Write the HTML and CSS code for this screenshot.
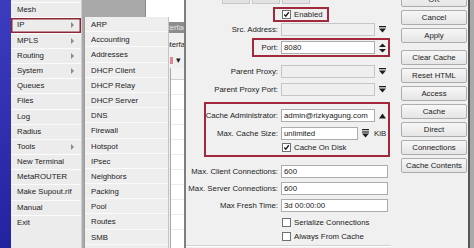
FILE: index.html
```html
<!DOCTYPE html>
<html>
<head>
<meta charset="utf-8">
<title>Web Proxy Settings</title>
<link rel="stylesheet" href="styles.css">
</head>
<body>
<div class="screen">
  <div class="brand"></div>

  <ul class="menu">
    <li></li>
    <li>Mesh</li>
    <li class="sub picked">IP</li>
    <li class="sub">MPLS</li>
    <li class="sub">Routing</li>
    <li class="sub">System</li>
    <li>Queues</li>
    <li>Files</li>
    <li>Log</li>
    <li>Radius</li>
    <li class="sub">Tools</li>
    <li>New Terminal</li>
    <li>MetaROUTER</li>
    <li>Make Supout.rif</li>
    <li>Manual</li>
    <li>Exit</li>
  </ul>

  <div class="desk">
    <div class="win back"></div>

    <div class="win iface">
      <div class="caption">Interface List</div>
      <div class="itab">Interface</div>
      <div class="itool"><span class="filter"></span><span class="drop">&#9662;</span></div>
      <div class="itable">
        <div class="ihead"></div>
        <div></div><div></div><div></div><div></div><div></div><div></div><div></div><div></div><div></div><div></div>
      </div>
    </div>

    <ul class="popup">
      <li>ARP</li>
      <li>Accounting</li>
      <li>Addresses</li>
      <li>DHCP Client</li>
      <li>DHCP Relay</li>
      <li>DHCP Server</li>
      <li>DNS</li>
      <li>Firewall</li>
      <li>Hotspot</li>
      <li>IPsec</li>
      <li>Neighbors</li>
      <li>Packing</li>
      <li>Pool</li>
      <li>Routes</li>
      <li>SMB</li>
    </ul>

    <div class="dialog">
      <div class="form">
        <div class="tabs"><span></span><span></span><span></span></div>

        <div class="sec s1">
          <div class="check"><span class="box on"><svg viewBox="0 0 9 9"><path d="M1.6 4.6l2 2 3.8-5"/></svg></span>Enabled</div>
          <div class="row">
            <span class="lbl">Src. Address:</span><span class="fld off"></span>
            <span class="arr"><svg viewBox="0 0 7 7" width="7" height="7"><rect width="7" height="1.3"/><path d="M0 2.6h7L3.5 6.6z"/></svg></span>
          </div>
        </div>

        <div class="sec s2">
          <div class="row">
            <span class="lbl">Port:</span><span class="fld">8080</span>
            <span class="arr"><svg viewBox="0 0 7 10" width="7" height="10"><path d="M0 4h7L3.5 0.4z M0 6h7L3.5 9.6z"/></svg></span>
          </div>
        </div>

        <div class="sec s3">
          <div class="row">
            <span class="lbl">Parent Proxy:</span><span class="fld off"></span>
            <span class="arr"><svg viewBox="0 0 7 7" width="7" height="7"><rect width="7" height="1.3"/><path d="M0 2.6h7L3.5 6.6z"/></svg></span>
          </div>
          <div class="row">
            <span class="lbl">Parent Proxy Port:</span><span class="fld off"></span>
            <span class="arr"><svg viewBox="0 0 7 7" width="7" height="7"><rect width="7" height="1.3"/><path d="M0 2.6h7L3.5 6.6z"/></svg></span>
          </div>
        </div>

        <div class="sec s4">
          <div class="row">
            <span class="lbl">Cache Administrator:</span><span class="fld">admin@rizkyagung.com</span>
            <span class="arr"><svg viewBox="0 0 7 6" width="7" height="6"><path d="M0 5.5h7L3.5 0.5z"/></svg></span>
          </div>
          <div class="row">
            <span class="lbl">Max. Cache Size:</span><span class="fld short">unlimited</span>
            <span class="arr"><svg viewBox="0 0 7 9" width="7" height="9"><rect width="7" height="1.2"/><rect y="2.4" width="7" height="1.2"/><path d="M0 4.6h7L3.5 8.6z"/></svg></span>
            <span class="unit">KiB</span>
          </div>
          <div class="check tight"><span class="box on"><svg viewBox="0 0 9 9"><path d="M1.6 4.6l2 2 3.8-5"/></svg></span>Cache On Disk</div>
        </div>

        <div class="sec s5">
          <div class="row">
            <span class="lbl">Max. Client Connections:</span><span class="fld wide">600</span>
          </div>
          <div class="row">
            <span class="lbl">Max. Server Connections:</span><span class="fld wide">600</span>
          </div>
          <div class="row">
            <span class="lbl">Max Fresh Time:</span><span class="fld wide">3d 00:00:00</span>
          </div>
          <div class="check"><span class="box"></span>Serialize Connections</div>
          <div class="check tight"><span class="box"></span>Always From Cache</div>
        </div>

        <div class="rule"></div>
      </div>

      <div class="buttons">
        <div class="btn">OK</div>
        <div class="btn">Cancel</div>
        <div class="btn">Apply</div>
        <div class="btn split">Clear Cache</div>
        <div class="btn">Reset HTML</div>
        <div class="btn">Access</div>
        <div class="btn">Cache</div>
        <div class="btn">Direct</div>
        <div class="btn">Connections</div>
        <div class="btn">Cache Contents</div>
      </div>

      <!-- red markers drawn over the form -->
      <div class="mark m-enabled"></div>
      <div class="mark m-port"></div>
      <div class="mark m-cache"></div>
    </div>
  </div>
</div>
</body>
</html>
```

FILE: styles.css
```css
html, body {
  margin: 0;
  height: 100%;
  font-family: "Liberation Sans", Arial, sans-serif;
  font-size: 7.8px;
  color: #222;
}
* {
  box-sizing: border-box;
}
ul {
  list-style: none;
  margin: 0;
  padding: 0;
}

.screen {
  display: flex;
  width: 474px;
  height: 248px;
  overflow: hidden;
  background: #a9a9a9;
}
.brand {
  width: 11px;
  background: linear-gradient(#3c3cbf, #2323a0);
}

/* left main menu */
.menu {
  width: 71px;
  margin-top: -13px;
  background: #ececec;
  border-right: 1px solid #cfcfcf;
}
.menu li {
  position: relative;
  height: 15.2px;
  line-height: 14px;
  padding-left: 6px;
  border-top: 1px solid #fbfbfb;
}
.menu li.sub::after {
  content: "";
  position: absolute;
  right: 7px;
  top: 4px;
  border-left: 3px solid #8a8a8a;
  border-top: 3px solid transparent;
  border-bottom: 3px solid transparent;
}
.menu li.picked {
  box-shadow: inset 0 0 0 1.5px #8f2636;
}

/* workspace with windows */
.desk {
  position: relative;
  flex: 1;
}
.win {
  position: absolute;
}
.back {
  left: 63px;
  top: 0;
  width: 40px;
  height: 30px;
  background: #fff;
  border-left: 1px solid #8a8a8a;
}
.iface {
  left: 18px;
  top: 22px;
  width: 84px;
  bottom: 0;
  background: #f0f0f0;
}
.caption {
  height: 11px;
  line-height: 11px;
  padding-left: 61px;
  background: #8d8d8d;
  color: #e4e4e4;
  white-space: nowrap;
  overflow: hidden;
}
.itab {
  height: 15px;
  margin-top: 4px;
  line-height: 15px;
  padding-left: 63px;
  white-space: nowrap;
  overflow: hidden;
}
.itool {
  display: flex;
  align-items: center;
  height: 16px;
  padding-left: 70px;
  font-size: 9px;
}
.filter {
  width: 3px;
  height: 7px;
  margin-right: 3px;
  background: #d98a96;
}
.itable {
  margin-left: 70px;
  height: 200px;
  background: #fff;
  border-left: 1px solid #a6a6a6;
}
.itable div {
  height: 15px;
  border-bottom: 1px solid #ececec;
}
.itable .ihead {
  height: 12px;
  background: #f4f4f4;
  border-bottom: 1px solid #cfcfcf;
}

/* IP submenu */
.popup {
  position: absolute;
  left: 2px;
  top: 17px;
  width: 85px;
  bottom: -10px;
  background: #eeeeee;
  border-left: 1px solid #9c9c9c;
  border-right: 1px solid #c4c4c4;
}
.popup li {
  height: 15.2px;
  line-height: 15px;
  padding-left: 6px;
  border-bottom: 1px solid #fafafa;
}

/* web proxy dialog */
.dialog {
  position: absolute;
  left: 102px;
  top: 0;
  width: 286px;
  bottom: 0;
  display: flex;
  background: #f0f0f0;
  border-left: 2px solid #7e7e7e;
  border-right: 2px solid #565656;
}
.form {
  width: 205px;
}
.tabs {
  display: flex;
  gap: 2px;
  height: 4px;
  padding-left: 36px;
}
.tabs span {
  width: 28px;
  background: #e2e2e2;
  border: 1px solid #c8c8c8;
  border-top: 0;
}
.sec {
  display: flex;
  flex-direction: column;
  gap: 5px;
}
.s1 { margin-top: 4px; gap: 2px; }
.s2 { margin-top: 5px; }
.s3 { margin-top: 11px; }
.s4 { margin-top: 13px; }
.s5 { margin-top: 12px; gap: 4px; }
.row {
  display: flex;
  align-items: center;
  height: 13px;
}
.lbl {
  width: 92px;
  text-align: right;
  white-space: nowrap;
}
.fld {
  width: 94px;
  height: 13px;
  margin-left: 3px;
  padding-left: 2px;
  line-height: 11px;
  background: #fff;
  border: 1px solid #acacac;
  white-space: nowrap;
  overflow: hidden;
}
.fld.off {
  background: #efefef;
  border-color: #c6c6c6;
}
.fld.short {
  width: 77px;
}
.fld.wide {
  width: 107px;
}
.arr {
  display: flex;
  justify-content: center;
  width: 15px;
}
.arr svg {
  fill: #1e1e1e;
}
.short + .arr {
  width: 14px;
}
.unit {
  padding-left: 2px;
}
.check {
  display: flex;
  align-items: center;
  height: 12px;
  padding-left: 96px;
}
.s1 .check {
  height: 13px;
}
.s4 .check.tight {
  margin-top: -5px;
  padding-top: 1px;
  height: 13px;
}
.s5 .check.tight {
  margin-top: -2px;
}
.box {
  width: 9px;
  height: 9px;
  margin-right: 3px;
  background: #fff;
  border: 1px solid #707070;
}
.box svg {
  display: block;
  width: 7px;
  height: 7px;
  fill: none;
  stroke: #1c1c1c;
  stroke-width: 1.7;
}
.rule {
  margin-top: 3px;
  height: 2px;
  border-top: 1px solid #d2d2d2;
  border-bottom: 1px solid #fff;
}

.buttons {
  display: flex;
  flex-direction: column;
  gap: 3px;
  width: 66px;
  margin-left: 10px;
  margin-top: -8px;
}
.btn {
  height: 15px;
  line-height: 13px;
  text-align: center;
  background: linear-gradient(#f7f7f7, #e5e5e5);
  border: 1px solid #adadad;
  border-radius: 2px;
}
.btn.split {
  margin-top: 4px;
}

.mark {
  position: absolute;
  border: 2px solid #a02a3c;
}
.m-enabled { left: 87px; top: 7px; width: 56px; height: 15px; }
.m-port { left: 66px; top: 38px; width: 138px; height: 19px; }
.m-cache { left: 18px; top: 102px; width: 186px; height: 55px; }
```
